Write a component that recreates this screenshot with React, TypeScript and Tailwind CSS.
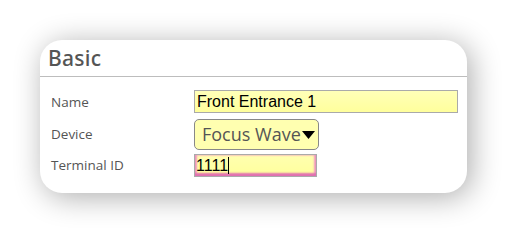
import React from "react";

export default function App() {
  return (
    <div className="w-[507px] h-[233px] bg-white pt-[40px] pl-[40px]">
      <div className="w-[427px] h-[153px] bg-white rounded-[22px] shadow-[4px_4px_30px_rgba(0,0,0,0.33)] overflow-hidden">
        <div className="h-[36px] pl-[8px] pt-[3px] text-[21px] leading-[30px] text-[#555] font-['Noto_Sans',sans-serif] font-medium tracking-[0.3px]">
          Basic
        </div>
        <div className="h-px bg-[#bdbdbd]" />
        <div className="pl-[11px] pt-[13px] flex flex-col font-['Open_Sans',sans-serif] text-[13.5px] text-[#555]">
          <div className="flex items-center h-[23px]">
            <div className="w-[143px] pt-[1px]">Name</div>
            <div className="w-[264px] h-[23px] border border-[#aaa] bg-[linear-gradient(#ffffb8,#ffff9c)] font-['Liberation_Sans',sans-serif] text-[16px] leading-[21px] text-black pl-[2px]">
              Front Entrance 1
            </div>
          </div>
          <div className="flex items-center h-[31px] mt-[6px]">
            <div className="w-[143px]">Device</div>
            <div className="w-[125px] h-[31px] border border-[#888] rounded-[5px] bg-[#ffffb0] flex items-center pl-[7px] text-[18px] text-[#555]">
              <span className="leading-[29px]">Focus Wave</span>
              <svg width="13" height="9" viewBox="0 0 13 9" className="ml-[1px] mt-[1px]">
                <polygon points="0,0 13,0 6.5,8" fill="#000" />
              </svg>
            </div>
          </div>
          <div className="flex items-center h-[23px] mt-[4px]">
            <div className="w-[143px]">Terminal ID</div>
            <div className="w-[123px] h-[23px] border border-[#aaa] bg-[linear-gradient(#ffffb0,#ffff9c)] shadow-[inset_0_-3px_2px_#e070b0,inset_-2px_0_2px_#f0a0c0,inset_2px_0_2px_#f0a0c0] font-['Liberation_Sans',sans-serif] text-[16px] leading-[21px] text-black pl-[1px] flex items-center">
              <span>1111</span>
              <span className="inline-block w-px h-[17px] bg-black" />
            </div>
          </div>
        </div>
      </div>
    </div>
  );
}
